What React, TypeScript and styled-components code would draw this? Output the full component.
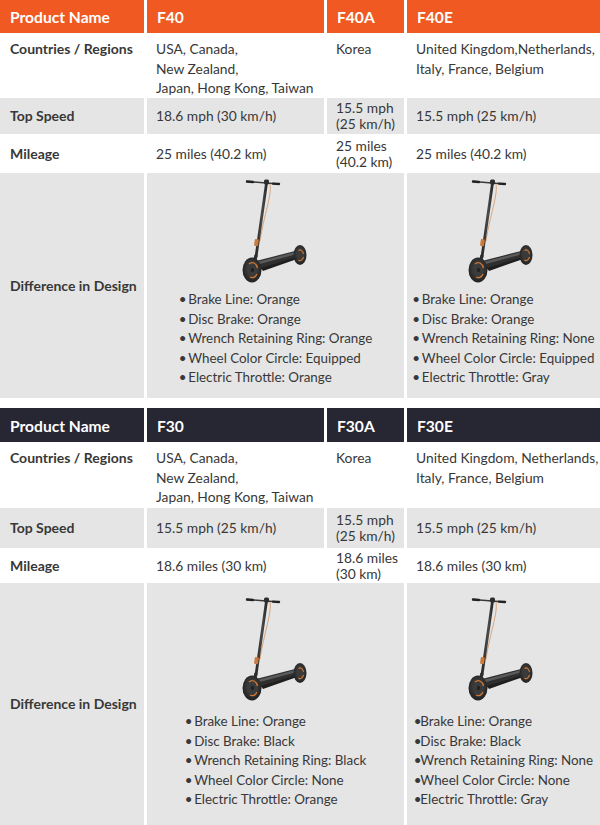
import React from "react";
import styled, { createGlobalStyle } from "styled-components";

const GlobalStyle = createGlobalStyle`
  html, body {
    margin: 0;
    padding: 0;
    background: #ffffff;
  }
  * {
    box-sizing: border-box;
  }
`;

const Page = styled.div`
  width: 600px;
  background: #ffffff;
  font-family: "Lato", "Liberation Sans", sans-serif;
  color: #383838;
  display: flex;
  flex-direction: column;
  gap: 10px;
`;

const Table = styled.div`
  display: flex;
  flex-direction: column;
`;

const Row = styled.div<{ $h: number; $shade?: boolean }>`
  display: grid;
  grid-template-columns: 144px 177px 77px 193px;
  column-gap: 3px;
  min-height: ${(p) => p.$h}px;
  background: #ffffff;
  & > div {
    background: ${(p) => (p.$shade ? "#e5e5e5" : "#ffffff")};
    white-space: nowrap;
    min-width: 0;
  }
`;

const HeadCell = styled.div<{ $bg: string }>`
  background: ${(p) => p.$bg} !important;
  color: #ffffff;
  font-weight: 700;
  font-size: 15.6px;
  display: flex;
  align-items: center;
  padding: 1px 10px 0;
`;

const Label = styled.div<{ $top?: boolean }>`
  font-weight: 700;
  font-size: 14px;
  line-height: 19.5px;
  padding: ${(p) => (p.$top ? "6px 0 0 10px" : "0 0 0 10px")};
  display: flex;
  align-items: ${(p) => (p.$top ? "flex-start" : "center")};
`;

const Cell = styled.div<{ $top?: boolean }>`
  font-size: 13.8px;
  line-height: ${(p) => (p.$top ? "19.5px" : "16px")};
  padding: ${(p) => (p.$top ? "6px 0 0 9px" : "0 0 0 9px")};
  display: flex;
  align-items: ${(p) => (p.$top ? "flex-start" : "center")};
`;

const DesignCell = styled.div<{ $span?: number; $gap: number; $pad: number }>`
  grid-column: span ${(p) => p.$span ?? 1};
  display: flex;
  flex-direction: column;
  align-items: center;
  justify-content: flex-start;
  padding-top: ${(p) => p.$pad}px;
  gap: ${(p) => p.$gap}px;
`;

const Features = styled.ul`
  list-style: none;
  margin: 0;
  padding: 0;
  font-size: 13.4px;
  line-height: 19.5px;
`;

const Feature = styled.li<{ $tight?: boolean }>`
  white-space: nowrap;
  height: 19.5px;
  &::before {
    content: "•";
    display: inline-block;
    width: ${(p) => (p.$tight ? "6.5px" : "9.5px")};
  }
`;

const ScooterSvg = styled.svg`
  width: 72px;
  height: 106px;
  display: block;
`;

const Scooter = ({ shift = 0 }: { shift?: number }) => (
  <ScooterSvg viewBox="0 2 72 106" style={{ marginLeft: shift }}>
    <defs>
      <radialGradient id="tyre" cx="50%" cy="45%" r="60%">
        <stop offset="0%" stopColor="#505050" />
        <stop offset="100%" stopColor="#1c1c1c" />
      </radialGradient>
      <linearGradient id="stem" x1="0" y1="0" x2="1" y2="0">
        <stop offset="0%" stopColor="#2a2a2a" />
        <stop offset="60%" stopColor="#4a4a4a" />
        <stop offset="100%" stopColor="#2a2a2a" />
      </linearGradient>
    </defs>
    {/* handlebar */}
    <line x1="8" y1="6.5" x2="40" y2="9" stroke="#3a3a3a" strokeWidth="1.6" strokeLinecap="round" />
    <line x1="8" y1="6.5" x2="14" y2="7" stroke="#222" strokeWidth="2.4" strokeLinecap="round" />
    <line x1="34" y1="8.6" x2="40" y2="9" stroke="#222" strokeWidth="2.4" strokeLinecap="round" />
    <rect x="25" y="4.5" width="5" height="5" rx="1.5" fill="#2e2e2e" />
    {/* brake cable */}
    <path d="M31 9 C33 20 25 40 21 66" stroke="#d28a4e" strokeWidth="0.7" fill="none" />
    {/* stem */}
    <line x1="27.5" y1="8" x2="17" y2="82" stroke="url(#stem)" strokeWidth="2.8" strokeLinecap="round" />
    <rect x="15.5" y="64" width="4" height="7" rx="1" fill="#c97a3c" transform="rotate(8 17 67)" />
    <line x1="17" y1="80" x2="14" y2="94" stroke="#2c2c2c" strokeWidth="3.2" />
    {/* deck */}
    <polygon points="17,86 56,76 60,79 61,83 20,95" fill="#2f2f2f" />
    <polygon points="18,87 56,77 58,79 19,89.5" fill="#5a5a5a" />
    <polygon points="22,93 58,82 58,84 24,96" fill="#1f1f1f" />
    {/* rear wheel */}
    <ellipse cx="61" cy="80" rx="6.5" ry="10" fill="url(#tyre)" />
    <ellipse cx="61.5" cy="80" rx="3.6" ry="6" fill="#3a3a3a" />
    <path d="M59.5 75.5 A3.6 6 0 0 1 64.5 79" stroke="#d07a36" strokeWidth="1.1" fill="none" />
    <path d="M64.5 82 A3.6 6 0 0 1 59.5 85" stroke="#d07a36" strokeWidth="1.1" fill="none" />
    {/* front wheel */}
    <ellipse cx="13" cy="95" rx="9.5" ry="12.5" fill="url(#tyre)" />
    <ellipse cx="13.5" cy="95" rx="5.5" ry="7.5" fill="#3b3b3b" />
    <path d="M10 89 A5.5 7.5 0 0 1 18.5 93" stroke="#cf7835" strokeWidth="1.3" fill="none" />
    <path d="M18 99 A5.5 7.5 0 0 1 11 102" stroke="#cf7835" strokeWidth="1.3" fill="none" />
    <ellipse cx="13.5" cy="95" rx="1.6" ry="2.2" fill="#222" />
  </ScooterSvg>
);

type Model = {
  name: string;
  countries: React.ReactNode;
  speed: React.ReactNode;
  mileage: React.ReactNode;
};

type Spec = {
  accent: string;
  heights: [number, number, number, number, number];
  gap: number;
  pad: number;
  models: [Model, Model, Model];
  designLeft: string[];
  designRight: string[];
  tightRight?: boolean;
};

const twoLines = (a: string, b: string) => (
  <>
    {a}
    <br />
    {b}
  </>
);

const americas = (
  <>
    USA, Canada,
    <br />
    New Zealand,
    <br />
    Japan, Hong Kong, Taiwan
  </>
);

const specs: Spec[] = [
  {
    accent: "#f05a22",
    heights: [33, 65, 36, 39, 225],
    gap: 7,
    pad: 4,
    models: [
      {
        name: "F40",
        countries: americas,
        speed: "18.6 mph (30 km/h)",
        mileage: "25 miles (40.2 km)",
      },
      {
        name: "F40A",
        countries: "Korea",
        speed: twoLines("15.5 mph", "(25 km/h)"),
        mileage: twoLines("25 miles", "(40.2 km)"),
      },
      {
        name: "F40E",
        countries: twoLines("United Kingdom,Netherlands,", "Italy, France, Belgium"),
        speed: "15.5 mph (25 km/h)",
        mileage: "25 miles (40.2 km)",
      },
    ],
    designLeft: [
      "Brake Line: Orange",
      "Disc Brake: Orange",
      "Wrench Retaining Ring: Orange",
      "Wheel Color Circle: Equipped",
      "Electric Throttle: Orange",
    ],
    designRight: [
      "Brake Line: Orange",
      "Disc Brake: Orange",
      "Wrench Retaining Ring: None",
      "Wheel Color Circle: Equipped",
      "Electric Throttle: Gray",
    ],
  },
  {
    accent: "#272733",
    heights: [34, 66, 40, 35, 242],
    gap: 11,
    pad: 12,
    models: [
      {
        name: "F30",
        countries: americas,
        speed: "15.5 mph (25 km/h)",
        mileage: "18.6 miles (30 km)",
      },
      {
        name: "F30A",
        countries: "Korea",
        speed: twoLines("15.5 mph", "(25 km/h)"),
        mileage: twoLines("18.6 miles", "(30 km)"),
      },
      {
        name: "F30E",
        countries: twoLines("United Kingdom, Netherlands,", "Italy, France, Belgium"),
        speed: "15.5 mph (25 km/h)",
        mileage: "18.6 miles (30 km)",
      },
    ],
    designLeft: [
      "Brake Line: Orange",
      "Disc Brake: Black",
      "Wrench Retaining Ring: Black",
      "Wheel Color Circle: None",
      "Electric Throttle: Orange",
    ],
    designRight: [
      "Brake Line: Orange",
      "Disc Brake: Black",
      "Wrench Retaining Ring: None",
      "Wheel Color Circle: None",
      "Electric Throttle: Gray",
    ],
    tightRight: true,
  },
];

const ComparisonTable = ({ spec }: { spec: Spec }) => {
  const [hHead, hCountry, hSpeed, hMile, hDesign] = spec.heights;
  return (
    <Table>
      <Row $h={hHead}>
        <HeadCell $bg={spec.accent}>Product Name</HeadCell>
        {spec.models.map((m) => (
          <HeadCell key={m.name} $bg={spec.accent}>
            {m.name}
          </HeadCell>
        ))}
      </Row>
      <Row $h={hCountry}>
        <Label $top>Countries / Regions</Label>
        {spec.models.map((m) => (
          <Cell key={m.name} $top>
            <span>{m.countries}</span>
          </Cell>
        ))}
      </Row>
      <Row $h={hSpeed} $shade>
        <Label>Top Speed</Label>
        {spec.models.map((m) => (
          <Cell key={m.name}>
            <span>{m.speed}</span>
          </Cell>
        ))}
      </Row>
      <Row $h={hMile}>
        <Label>Mileage</Label>
        {spec.models.map((m) => (
          <Cell key={m.name}>
            <span>{m.mileage}</span>
          </Cell>
        ))}
      </Row>
      <Row $h={hDesign} $shade>
        <Label>Difference in Design</Label>
        <DesignCell $span={2} $gap={spec.gap} $pad={spec.pad}>
          <Scooter shift={-2} />
          <Features>
            {spec.designLeft.map((f) => (
              <Feature key={f}>{f}</Feature>
            ))}
          </Features>
        </DesignCell>
        <DesignCell $gap={spec.gap} $pad={spec.pad}>
          <Scooter shift={-6} />
          <Features>
            {spec.designRight.map((f) => (
              <Feature key={f} $tight={spec.tightRight}>
                {f}
              </Feature>
            ))}
          </Features>
        </DesignCell>
      </Row>
    </Table>
  );
};

export default function App() {
  return (
    <>
      <GlobalStyle />
      <Page>
        {specs.map((s) => (
          <ComparisonTable key={s.models[0].name} spec={s} />
        ))}
      </Page>
    </>
  );
}
